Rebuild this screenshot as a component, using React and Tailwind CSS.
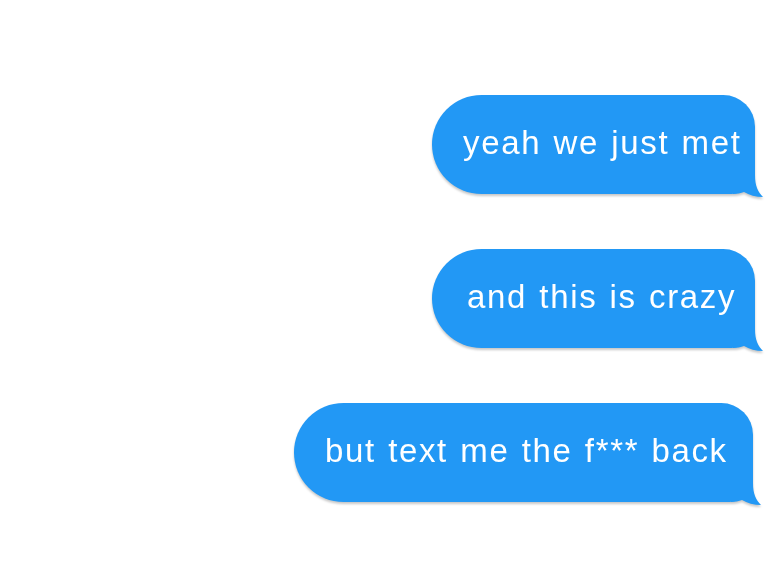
import React from 'react';

const messages = [
    { text: 'yeah we just met', wrap: '', box: 'w-[323px] pl-[31px]' },
    { text: 'and this is crazy', wrap: '', box: 'w-[323px] pl-[35px]' },
    { text: 'but text me the f*** back', wrap: 'mr-[2px]', box: 'w-[459px] pl-[31px]' },
];

const Bubble = ({ text, wrap, box }) => (
    <div className={`relative drop-shadow-[0_2px_1px_rgba(0,0,0,0.22)] ${wrap}`}>
        <div className={`relative z-10 h-[99px] rounded-l-[50px] rounded-tr-[32px] rounded-br-[24px] bg-[#2298f5] pb-[5px] flex items-center text-white text-[33px] tracking-[1.65px] [word-spacing:1.5px] leading-none whitespace-nowrap ${box}`}>
            {text}
        </div>
        <svg
            className="absolute z-20 right-[-8px] bottom-[-3px] w-[30px] h-[40px]"
            viewBox="0 0 30 40"
        >
            <path
                d="M0 0 H22 V18 C22 29 25 35 30 40 C23 40 16 38 11 35 C8 36 4 37 0 37 Z"
                fill="#2298f5"
            />
        </svg>
    </div>
);

export default function App() {
    return (
        <div
            className="w-[768px] h-[576px] bg-white flex flex-col items-end pt-[95px] pr-[13px] gap-[55px]"
            style={{ fontFamily: '"Liberation Sans", Arial, sans-serif' }}
        >
            {messages.map((m) => (
                <Bubble key={m.text} text={m.text} wrap={m.wrap} box={m.box} />
            ))}
        </div>
    );
}
